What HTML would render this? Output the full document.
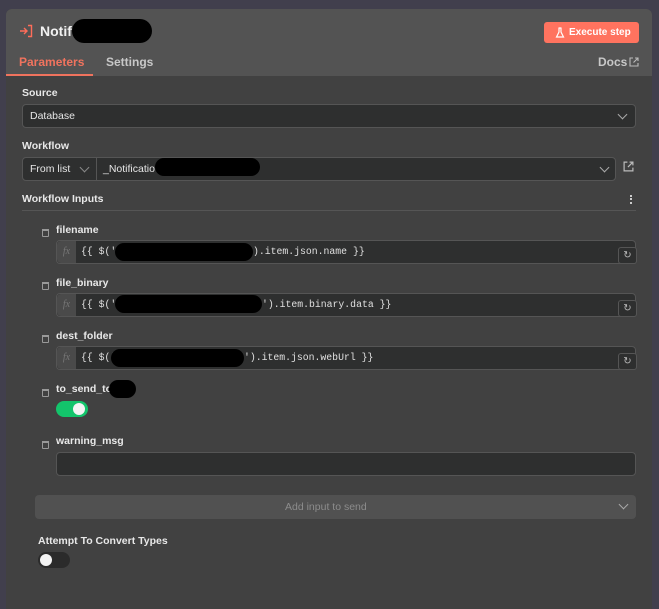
<!DOCTYPE html>
<html><head><meta charset="utf-8"><style>
*{box-sizing:border-box;margin:0;padding:0}
body{width:659px;height:587px;background:#413f4d;font-family:"Liberation Sans",sans-serif;position:relative;overflow:hidden;color:#e0e0e0}
.a{position:absolute}
.panel{left:6px;top:9px;width:646px;height:600px;background:#414141;border-radius:6px 6px 0 0;overflow:hidden}
.hdr{left:0;top:0;width:646px;height:67px;background:#535353}
.lbl{font-size:10.5px;font-weight:bold;color:#e8e8e8}
.inp{background:#2e2f2f;border:1px solid #555;border-radius:4px}
.mono{font-family:"Liberation Mono",monospace;font-size:9.8px;color:#e0e0e0}
.fx{background:#4a4a4a;border-radius:4px 0 0 4px;color:#777;font-style:italic;font-family:"Liberation Serif",serif;font-size:10px;text-align:center;line-height:22px}
.blk{background:#000;border-radius:12px}
.rst{width:19px;height:17px;border:1px solid #555;border-radius:3px;background:#2e2f2f;color:#bbb;font-size:10px;text-align:center;line-height:15px}
.tr{width:7px;height:8px;border:1px solid #999;border-top:2px solid #999;border-radius:0 0 1px 1px}
.chev{width:7px;height:7px;border-right:1.2px solid #aaa;border-bottom:1.2px solid #aaa;transform:rotate(45deg)}
</style></head><body>
<div class="a panel">
 <div class="a hdr"></div>
</div>
<svg class="a" style="left:19px;top:24px" width="14" height="14" viewBox="0 0 14 14" fill="none" stroke="#ff6d5a" stroke-width="1.4"><path d="M1 7h7M5 4l3 3-3 3M9 1.5h3.5v11H9"/></svg>
<div class="a" style="left:40px;top:23px;font-size:14px;font-weight:bold;color:#f2f2f2">Notif</div>
<div class="a blk" style="left:72px;top:19px;width:80px;height:24px;border-radius:14px"></div>
<div class="a" style="left:544px;top:22px;width:95px;height:21px;background:#ff735f;border-radius:3px;color:#fff;font-size:10px;font-weight:bold;line-height:21px;padding-left:25px">Execute step</div>
<svg class="a" style="left:555px;top:27px" width="10" height="11" viewBox="0 0 10 11" fill="none" stroke="#fff" stroke-width="1.2"><path d="M3.5 1h3M4 1v4L1.5 10h7L6 5V1"/></svg>
<div class="a" style="left:19px;top:55px;font-size:12px;font-weight:bold;color:#f0735e">Parameters</div>
<div class="a" style="left:6px;top:74px;width:87px;height:2px;background:#f0735e"></div>
<div class="a" style="left:106px;top:55px;font-size:12px;font-weight:bold;color:#c8c8c8">Settings</div>
<div class="a" style="left:598px;top:55px;font-size:12px;font-weight:bold;color:#c8c8c8">Docs</div>
<svg class="a" style="left:629px;top:57px" width="10" height="10" viewBox="0 0 10 10" fill="none" stroke="#bbb" stroke-width="1.1"><path d="M4 1H1v8h8V6M6 1h3v3M9 1L4.5 5.5"/></svg>
<div class="a lbl" style="left:22px;top:87px">Source</div>
<div class="a inp" style="left:22px;top:104px;width:614px;height:24px"></div>
<div class="a" style="left:30px;top:110px;font-size:10.5px;color:#e6e6e6">Database</div>
<div class="a chev" style="left:619px;top:111px"></div>
<div class="a lbl" style="left:22px;top:140px">Workflow</div>
<div class="a inp" style="left:22px;top:157px;width:594px;height:24px"></div>
<div class="a" style="left:96px;top:158px;width:1px;height:22px;background:#555"></div>
<div class="a" style="left:30px;top:163px;font-size:10.5px;color:#e6e6e6">From list</div>
<div class="a chev" style="left:81px;top:164px;border-color:#888"></div>
<div class="a" style="left:103px;top:163px;font-size:10.5px;color:#e6e6e6">_Notificatio</div>
<div class="a blk" style="left:155px;top:158px;width:105px;height:18px"></div>
<div class="a chev" style="left:601px;top:164px"></div>
<svg class="a" style="left:623px;top:161px" width="11" height="11" viewBox="0 0 10 10" fill="none" stroke="#bbb" stroke-width="1.1"><path d="M4 1H1v8h8V6M6 1h3v3M9 1L4.5 5.5"/></svg>
<div class="a lbl" style="left:22px;top:193px">Workflow Inputs</div>
<div class="a" style="left:630px;top:195px;width:2px;height:9px;border-left:2px dotted #ccc"></div>
<div class="a" style="left:22px;top:210px;width:614px;height:1px;background:#555"></div>

<div class="a tr" style="left:42px;top:229px"></div>
<div class="a lbl" style="left:56px;top:224px">filename</div>
<div class="a inp" style="left:56px;top:240px;width:580px;height:24px"></div>
<div class="a fx" style="left:57px;top:241px;width:19px;height:22px">fx</div>
<div class="a mono" style="left:81px;top:246px">{{ $('</div><div class="a blk" style="left:115px;top:243px;width:138px;height:18px"></div>
<div class="a mono" style="left:253px;top:246px">).item.json.name }}</div>
<div class="a rst" style="left:618px;top:247px">↻</div>

<div class="a tr" style="left:42px;top:282px"></div>
<div class="a lbl" style="left:56px;top:277px">file_binary</div>
<div class="a inp" style="left:56px;top:293px;width:580px;height:24px"></div>
<div class="a fx" style="left:57px;top:294px;width:19px;height:22px">fx</div>
<div class="a mono" style="left:81px;top:299px">{{ $('</div><div class="a blk" style="left:115px;top:295px;width:147px;height:18px"></div>
<div class="a mono" style="left:262px;top:299px">').item.binary.data }}</div>
<div class="a rst" style="left:618px;top:300px">↻</div>

<div class="a tr" style="left:42px;top:335px"></div>
<div class="a lbl" style="left:56px;top:330px">dest_folder</div>
<div class="a inp" style="left:56px;top:346px;width:580px;height:24px"></div>
<div class="a fx" style="left:57px;top:347px;width:19px;height:22px">fx</div>
<div class="a mono" style="left:81px;top:352px">{{ $('</div><div class="a blk" style="left:111px;top:349px;width:133px;height:18px"></div>
<div class="a mono" style="left:244px;top:352px">').item.json.webUrl }}</div>
<div class="a rst" style="left:618px;top:353px">↻</div>

<div class="a tr" style="left:42px;top:389px"></div>
<div class="a lbl" style="left:56px;top:383px">to_send_to_</div>
<div class="a blk" style="left:109px;top:380px;width:27px;height:18px;border-radius:9px"></div>
<div class="a" style="left:56px;top:401px;width:32px;height:16px;background:#13c46b;border-radius:8px"></div>
<div class="a" style="left:73px;top:403px;width:12px;height:12px;background:#f4f4f4;border-radius:6px"></div>

<div class="a tr" style="left:42px;top:441px"></div>
<div class="a lbl" style="left:56px;top:435px">warning_msg</div>
<div class="a inp" style="left:56px;top:452px;width:580px;height:24px"></div>

<div class="a" style="left:35px;top:495px;width:601px;height:24px;background:#515151;border-radius:4px"></div>
<div class="a" style="left:285px;top:501px;font-size:10.5px;color:#8c8c8c">Add input to send</div>
<div class="a chev" style="left:620px;top:501px"></div>

<div class="a lbl" style="left:38px;top:535px">Attempt To Convert Types</div>
<div class="a" style="left:38px;top:552px;width:32px;height:16px;background:#2b2b2b;border-radius:8px"></div>
<div class="a" style="left:40px;top:554px;width:12px;height:12px;background:#f4f4f4;border-radius:6px"></div>
</body></html>
